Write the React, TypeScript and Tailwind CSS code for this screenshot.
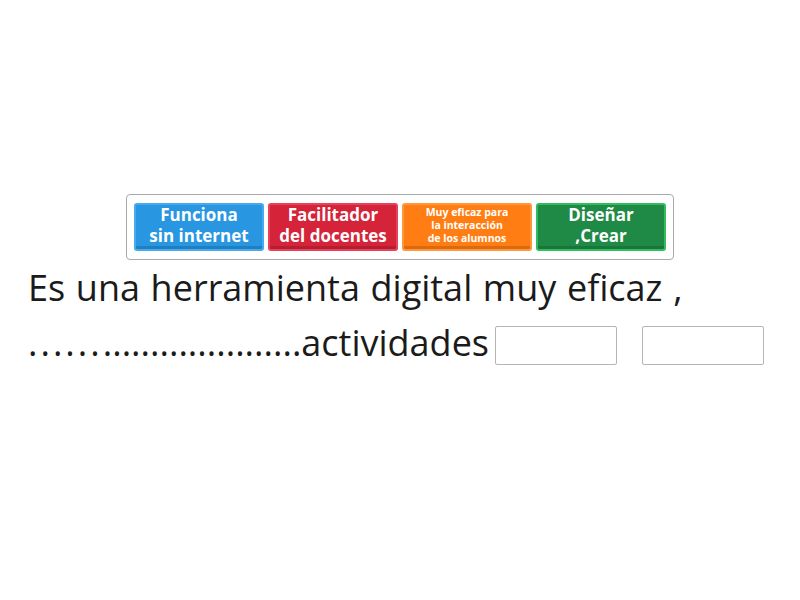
import React from 'react';

type Tile = {
  label: string[];
  small?: boolean;
  className: string;
};

const tiles: Tile[] = [
  {
    label: ['Funciona', 'sin internet'],
    className: 'bg-[#2896e0] border-[#45aaf0]',
  },
  {
    label: ['Facilitador', 'del docentes'],
    className: 'bg-[#d5233a] border-[#e6425a]',
  },
  {
    label: ['Muy eficaz para', 'la interacción', 'de los alumnos'],
    small: true,
    className: 'bg-[#ff7d12] border-[#ff983c]',
  },
  {
    label: ['Diseñar', ',Crear'],
    className: 'bg-[#1f8a45] border-[#2fbd5e]',
  },
];

const App: React.FC = () => {
  return (
    <div className="min-h-screen w-full bg-white pt-[194px] font-['Open_Sans',sans-serif] text-[#1b1b1b]">
      {/* answer tiles */}
      <div className="mx-auto flex h-[66px] w-[548px] gap-[4px] rounded-[4px] border border-[#aaaaaa] px-[7px] pt-[8px]">
        {tiles.map((tile) => (
          <div
            key={tile.label.join(' ')}
            className={`flex h-[48px] w-[130px] flex-col items-center justify-center rounded-[3px] border-2 text-center font-bold text-white shadow-[inset_0_-3px_0_rgba(0,0,0,0.15)] ${tile.className} ${
              tile.small ? 'pb-[3px] text-[10.5px] leading-[13px]' : 'pb-[5px] text-[17px] leading-[21px]'
            }`}
          >
            {tile.label.map((line) => (
              <span key={line} className="whitespace-nowrap">{line}</span>
            ))}
          </div>
        ))}
      </div>

      {/* sentence with gaps */}
      <div className="px-[28px] text-[36px] leading-[55px]">
        <div className="whitespace-nowrap [word-spacing:1.3px]">Es una herramienta digital muy eficaz ,</div>
        <div className="whitespace-nowrap">
          <span className="tracking-[3px]">......</span>.....................actividades
          <span className="ml-[6px] inline-block h-[39px] w-[122px] rounded-[2px] border border-[#b5b5b5] align-[-9px]" />
          <span className="ml-[25px] inline-block h-[39px] w-[122px] rounded-[2px] border border-[#b5b5b5] align-[-9px]" />
        </div>
      </div>
    </div>
  );
};

export default App;
